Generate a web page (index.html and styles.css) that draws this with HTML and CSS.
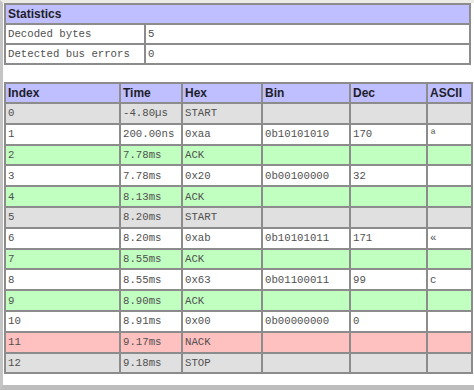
FILE: index.html
```html
<!DOCTYPE html>
<html>
<head>
<meta charset="utf-8">
<link rel="stylesheet" href="styles.css">
</head>
<body>
<div class="frame">
  <table class="grid stats">
    <colgroup><col class="c-label"><col></colgroup>
    <tr class="head"><th colspan="2">Statistics</th></tr>
    <tr><td>Decoded bytes</td><td>5</td></tr>
    <tr><td>Detected bus errors</td><td>0</td></tr>
  </table>

  <table class="grid data">
    <colgroup>
      <col class="c-index"><col class="c-time"><col class="c-hex"><col class="c-bin"><col class="c-dec"><col class="c-ascii">
    </colgroup>
    <tr class="head"><th>Index</th><th>Time</th><th>Hex</th><th>Bin</th><th>Dec</th><th>ASCII</th></tr>
    <tr class="gray"><td>0</td><td>-4.80µs</td><td>START</td><td></td><td></td><td></td></tr>
    <tr class="white"><td>1</td><td>200.00ns</td><td>0xaa</td><td>0b10101010</td><td>170</td><td class="small">ª</td></tr>
    <tr class="green"><td>2</td><td>7.78ms</td><td>ACK</td><td></td><td></td><td></td></tr>
    <tr class="white"><td>3</td><td>7.78ms</td><td>0x20</td><td>0b00100000</td><td>32</td><td></td></tr>
    <tr class="green"><td>4</td><td>8.13ms</td><td>ACK</td><td></td><td></td><td></td></tr>
    <tr class="gray"><td>5</td><td>8.20ms</td><td>START</td><td></td><td></td><td></td></tr>
    <tr class="white"><td>6</td><td>8.20ms</td><td>0xab</td><td>0b10101011</td><td>171</td><td class="small">«</td></tr>
    <tr class="green"><td>7</td><td>8.55ms</td><td>ACK</td><td></td><td></td><td></td></tr>
    <tr class="white"><td>8</td><td>8.55ms</td><td>0x63</td><td>0b01100011</td><td>99</td><td>c</td></tr>
    <tr class="green"><td>9</td><td>8.90ms</td><td>ACK</td><td></td><td></td><td></td></tr>
    <tr class="white"><td>10</td><td>8.91ms</td><td>0x00</td><td>0b00000000</td><td>0</td><td></td></tr>
    <tr class="red"><td>11</td><td>9.17ms</td><td>NACK</td><td></td><td></td><td></td></tr>
    <tr class="gray"><td>12</td><td>9.18ms</td><td>STOP</td><td></td><td></td><td></td></tr>
  </table>
</div>
</body>
</html>
```
FILE: styles.css
```css
html, body {
  margin: 0;
  padding: 0;
  background: #ffffff;
}
.frame {
  box-sizing: border-box;
  width: 474px;
  height: 390px;
  border-left: 3px solid #c4c4c4;
  border-top: 3px solid #ecebe6;
  border-bottom: 5px solid #bdbdbd;
  padding: 0 0 0 1px;
  display: flex;
  flex-direction: column;
  gap: 17px;
  overflow: hidden;
}
.grid {
  border-collapse: collapse;
  table-layout: fixed;
  width: 467px;
}
.grid td, .grid th {
  border: 2px solid #8c8c8c;
  padding: 0 2px;
  height: 18.8px;
  text-align: left;
  vertical-align: middle;
  white-space: nowrap;
  overflow: hidden;
}
.stats td, .stats th { height: 18px; }
.data th { height: 18px; }
.grid td {
  font-family: "Liberation Mono", monospace;
  font-size: 10.7px;
  color: #505050;
}
.grid th {
  font-family: "Liberation Sans", Arial, sans-serif;
  font-weight: bold;
  font-size: 12px;
  color: #1e1e2a;
}
.head th { background: #bfbfff; }
.stats .c-label { width: 140px; }
.c-index { width: 115px; }
.c-time { width: 62px; }
.c-hex { width: 80px; }
.c-bin { width: 88px; }
.c-dec { width: 77px; }
.c-ascii { width: 45px; }
.gray td { background: #e0e0e0; }
.white td { background: #ffffff; }
.green td { background: #c0ffc0; }
.red td { background: #ffc0c0; }
.small { font-size: 8px; }
```
